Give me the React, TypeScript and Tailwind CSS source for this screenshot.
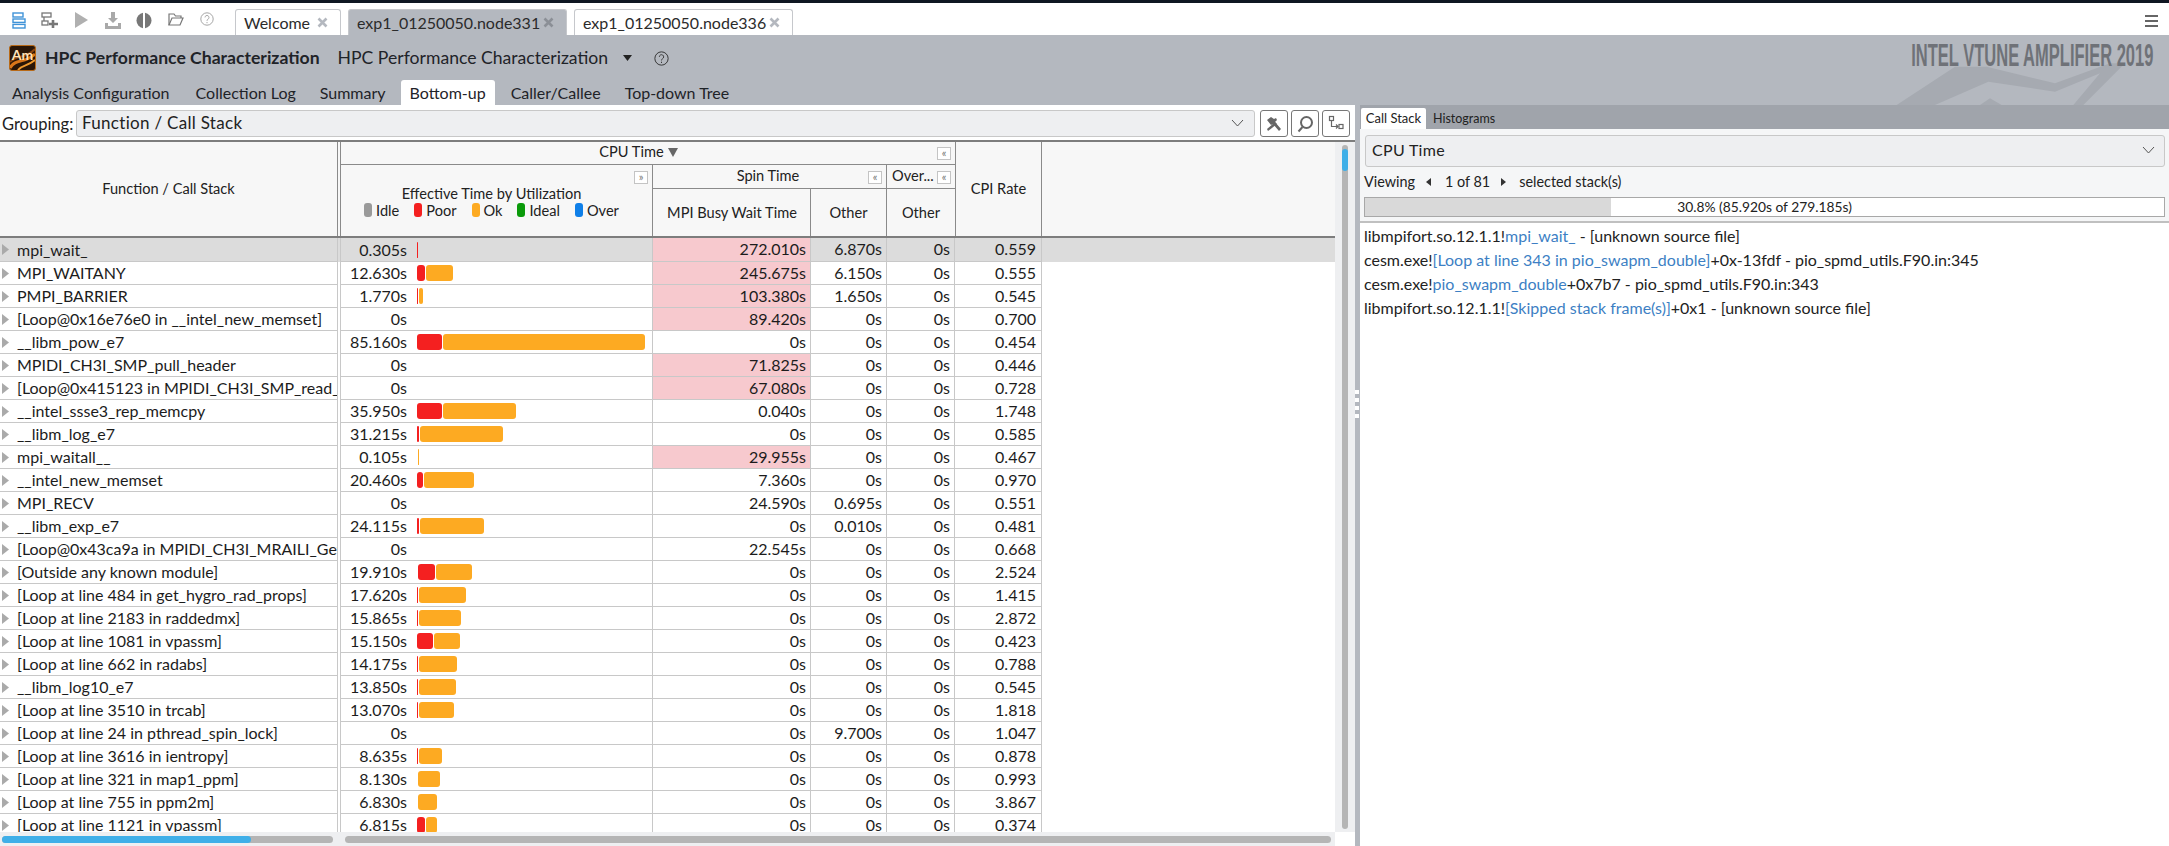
import React from 'react';

type Row = {
  name: string;
  eff: string;
  red?: number; // width of the red bar
  orange?: number;
  gap?: number; // left offset before the first bar
  busy: string;
  spin?: string;
  cpi: string;
  hot?: boolean;
};

const rows: Row[] = [
  { name: 'mpi_wait_', eff: '0.305s', red: 1, busy: '272.010s', spin: '6.870s', cpi: '0.559', hot: true },
  { name: 'MPI_WAITANY', eff: '12.630s', red: 8, orange: 27, busy: '245.675s', spin: '6.150s', cpi: '0.555', hot: true },
  { name: 'PMPI_BARRIER', eff: '1.770s', red: 1, orange: 4, busy: '103.380s', spin: '1.650s', cpi: '0.545', hot: true },
  { name: '[Loop@0x16e76e0 in __intel_new_memset]', eff: '0s', busy: '89.420s', cpi: '0.700', hot: true },
  { name: '__libm_pow_e7', eff: '85.160s', red: 25, orange: 202, busy: '0s', cpi: '0.454' },
  { name: 'MPIDI_CH3I_SMP_pull_header', eff: '0s', busy: '71.825s', cpi: '0.446', hot: true },
  { name: '[Loop@0x415123 in MPIDI_CH3I_SMP_read_', eff: '0s', busy: '67.080s', cpi: '0.728', hot: true },
  { name: '__intel_ssse3_rep_memcpy', eff: '35.950s', red: 25, orange: 73, busy: '0.040s', cpi: '1.748' },
  { name: '__libm_log_e7', eff: '31.215s', red: 2, orange: 83, busy: '0s', cpi: '0.585' },
  { name: 'mpi_waitall__', eff: '0.105s', orange: 1, gap: 1, busy: '29.955s', cpi: '0.467', hot: true },
  { name: '__intel_new_memset', eff: '20.460s', red: 6, orange: 50, busy: '7.360s', cpi: '0.970' },
  { name: 'MPI_RECV', eff: '0s', busy: '24.590s', spin: '0.695s', cpi: '0.551' },
  { name: '__libm_exp_e7', eff: '24.115s', red: 2, orange: 64, busy: '0s', spin: '0.010s', cpi: '0.481' },
  { name: '[Loop@0x43ca9a in MPIDI_CH3I_MRAILI_Get', eff: '0s', busy: '22.545s', cpi: '0.668' },
  { name: '[Outside any known module]', eff: '19.910s', red: 17, orange: 36, gap: 1, busy: '0s', cpi: '2.524' },
  { name: '[Loop at line 484 in get_hygro_rad_props]', eff: '17.620s', red: 1, orange: 47, busy: '0s', cpi: '1.415' },
  { name: '[Loop at line 2183 in raddedmx]', eff: '15.865s', red: 1, orange: 42, busy: '0s', cpi: '2.872' },
  { name: '[Loop at line 1081 in vpassm]', eff: '15.150s', red: 16, orange: 26, busy: '0s', cpi: '0.423' },
  { name: '[Loop at line 662 in radabs]', eff: '14.175s', red: 1, orange: 38, busy: '0s', cpi: '0.788' },
  { name: '__libm_log10_e7', eff: '13.850s', red: 1, orange: 37, busy: '0s', cpi: '0.545' },
  { name: '[Loop at line 3510 in trcab]', eff: '13.070s', red: 1, orange: 35, busy: '0s', cpi: '1.818' },
  { name: '[Loop at line 24 in pthread_spin_lock]', eff: '0s', busy: '0s', spin: '9.700s', cpi: '1.047' },
  { name: '[Loop at line 3616 in ientropy]', eff: '8.635s', red: 1, orange: 23, busy: '0s', cpi: '0.878' },
  { name: '[Loop at line 321 in map1_ppm]', eff: '8.130s', orange: 22, gap: 1, busy: '0s', cpi: '0.993' },
  { name: '[Loop at line 755 in ppm2m]', eff: '6.830s', orange: 19, gap: 1, busy: '0s', cpi: '3.867' },
  { name: '[Loop at line 1121 in vpassm]', eff: '6.815s', red: 8, orange: 11, busy: '0s', cpi: '0.374' },
];

const Collapse = ({ label, top }: { label: string; top: string }) => (
  <span className={`absolute right-[4px] flex h-[13px] w-[14px] items-center justify-center border border-[#c4c4c4] bg-white pb-[2px] text-[11px] leading-none text-[#777] ${top}`}>
    {label}
  </span>
);

const Pill = ({ color, label }: { color: string; label: string }) => (
  <span className="flex items-center gap-[4px]">
    <span className={`h-[14px] w-[8px] rounded-[3px] ${color}`} />
    {label}
  </span>
);

const Tab = ({ label, active, width }: { label: string; active?: boolean; width: string }) => (
  <div
    className={`flex h-[26px] items-center justify-between rounded-t-[3px] border border-b-0 border-[#c6c8cc] pl-[8px] pr-[12px] text-[16px] text-[#2b2b2b] ${width} ${
      active ? 'bg-[#b4b8bf]' : 'bg-white'
    }`}
  >
    <span>{label}</span>
    <svg width="11" height="11" viewBox="0 0 11 11">
      <path d="M1.5 1.5l8 8M9.5 1.5l-8 8" stroke={active ? '#8b8f96' : '#b4b8bf'} strokeWidth="2.6" />
    </svg>
  </div>
);

const Toolbar = () => (
  <div className="flex h-[32px] items-end bg-white">
    <div className="flex h-[32px] w-[235px] items-start pl-[12px] pt-[9px]">
      <svg width="14" height="17" viewBox="0 0 14 17" fill="none" stroke="#3f93d8" strokeWidth="1.4">
        <rect x="1" y="1" width="10" height="4" />
        <rect x="1" y="7" width="12" height="3.4" />
        <rect x="1" y="12.4" width="12" height="3.6" />
      </svg>
      <svg className="ml-[15px]" width="17" height="17" viewBox="0 0 17 17" fill="none" stroke="#777" strokeWidth="1.3">
        <rect x="1" y="1" width="9" height="4" />
        <rect x="1" y="9" width="6" height="4" />
        <path d="M3 5v4" />
        <path d="M12 8v8M8 12h9" strokeWidth="2.6" />
      </svg>
      <svg className="ml-[17px]" width="13" height="16" viewBox="0 0 13 16">
        <path d="M0 0l13 8-13 8z" fill="#b0b0b0" />
      </svg>
      <svg className="ml-[17px]" width="16" height="17" viewBox="0 0 16 17" fill="#a9a9a9">
        <path d="M6 0h4v6h3l-5 5-5-5h3z" />
        <path d="M0 11h3v3h10v-3h3v6H0z" />
      </svg>
      <svg className="ml-[15px]" width="16" height="17" viewBox="0 0 16 17" fill="#777">
        <path d="M7 .64A8 8 0 0 0 7 16.36z" />
        <path d="M9 .64A8 8 0 0 1 9 16.36z" />
      </svg>
      <svg className="ml-[16px]" width="16" height="15" viewBox="0 0 16 15" fill="none" stroke="#777" strokeWidth="1.2">
        <path d="M1 13V2h5l1.5 2H13v2" />
        <path d="M1 13l3-7h11l-3 7z" />
      </svg>
      <svg className="ml-[16px]" width="14" height="14" viewBox="0 0 14 14" fill="none" stroke="#a5a5a5" strokeWidth="1">
        <circle cx="7" cy="7" r="6.2" />
        <path d="M5 5.4a2 2 0 1 1 3 1.8c-.7.4-1 .8-1 1.6M7 10v1.2" />
      </svg>
    </div>
    <div className="flex items-end gap-[7px]">
      <Tab label="Welcome" width="w-[106px]" />
      <Tab label="exp1_01250050.node331" active width="w-[219px]" />
      <Tab label="exp1_01250050.node336" width="w-[219px]" />
    </div>
    <div className="mb-[8px] ml-auto mr-[11px] flex w-[13px] flex-col gap-[3px]">
      <span className="h-[2px] bg-[#666]" />
      <span className="h-[2px] bg-[#666]" />
      <span className="h-[2px] bg-[#666]" />
    </div>
  </div>
);

const Logo = () => (
  <div className="relative flex h-[26px] w-[27px] items-center justify-center overflow-hidden rounded-[3px] border border-[#b86a18] bg-[#2a1607]">
    <svg className="absolute inset-0" width="25" height="24" viewBox="0 0 25 24" fill="none">
      <path d="M0 22C6 12 14 18 25 8" stroke="#d9761a" strokeWidth="3" />
      <path d="M0 16C8 8 14 14 25 3" stroke="#8a4510" strokeWidth="2" />
      <path d="M8 24C12 19 18 20 25 14" stroke="#f09a2e" strokeWidth="2" />
    </svg>
    <span className="relative pb-[6px] text-[14px] font-bold leading-none text-[#ffe3b8]">Am</span>
  </div>
);

const Header = () => (
  <div className="relative h-[70px] overflow-hidden bg-[#b4b8bf] text-[#1f2328]">
    <svg className="absolute right-0 top-0" width="289" height="70" viewBox="0 15 867 210" fill="#a6aab1">
      <path d="M50 225L225 110h95l205 50 165-60h45L610 225h-30l80-95-135 55-200-30-160 70z" />
      <path d="M300 225l30-20 35 20z" />
    </svg>
    <div className="absolute right-[16px] top-[2px] origin-right scale-x-[0.516] whitespace-nowrap font-['Liberation_Sans'] text-[32px] font-bold leading-[36px] text-[#6f7278]">
      INTEL VTUNE AMPLIFIER 2019
    </div>
    <div className="flex h-[45px] items-center pl-[9px] pt-[1px]">
      <Logo />
      <span className="ml-[9px] text-[17.6px] font-bold">HPC Performance Characterization</span>
      <span className="ml-[18px] text-[17.6px]">HPC Performance Characterization</span>
      <svg className="ml-[15px]" width="9" height="6" viewBox="0 0 9 6">
        <path d="M0 0h9L4.5 6z" fill="#222" />
      </svg>
      <svg className="ml-[22px]" width="15" height="15" viewBox="0 0 14 14" fill="none" stroke="#333" strokeWidth="0.9">
        <circle cx="7" cy="7" r="6.2" />
        <path d="M5 5.4a2 2 0 1 1 3 1.8c-.7.4-1 .8-1 1.6M7 10v1.2" />
      </svg>
    </div>
    <div className="flex h-[25px] items-end text-[16px]">
      <span className="ml-[12px] flex h-[25px] items-center">Analysis Configuration</span>
      <span className="ml-[26px] flex h-[25px] items-center">Collection Log</span>
      <span className="ml-[24px] flex h-[25px] items-center">Summary</span>
      <span className="ml-[15px] flex h-[25px] items-center rounded-t-[3px] bg-white px-[9px]">Bottom-up</span>
      <span className="ml-[16px] flex h-[25px] items-center">Caller/Callee</span>
      <span className="ml-[24px] flex h-[25px] items-center">Top-down Tree</span>
    </div>
  </div>
);

const Chevron = () => (
  <svg width="13" height="8" viewBox="0 0 13 8" fill="none" stroke="#555" strokeWidth="1">
    <path d="M1 1l5.5 6L12 1" />
  </svg>
);

const ToolButton = ({ children }: { children: React.ReactNode }) => (
  <div className="flex h-[27px] w-[28px] items-center justify-center rounded-[3px] border border-[#777] bg-white">{children}</div>
);

const Grouping = () => (
  <div className="flex h-[37px] shrink-0 items-start border-b-2 border-[#7d7d7d] pt-[5px] text-[#222]">
    <span className="ml-[2px] w-[74px] pt-[2px] text-[16.5px]">Grouping:</span>
    <div className="flex h-[27px] w-[1179px] items-center justify-between rounded-[3px] border border-[#c8c8c8] bg-[#eeeff1] pb-[2px] pl-[5px] pr-[10px] text-[17px] tracking-[0.3px]">
      Function / Call Stack
      <Chevron />
    </div>
    <div className="ml-[5px] flex gap-[3px]">
      <ToolButton>
        <svg width="18" height="18" viewBox="0 0 18 18" fill="#666">
          <path d="M2 5l4-3 3 2 2-1 1 2-2 2 6 7-2 2-6-7-2 1z" />
          <path d="M12 9l-9 7-1-2 8-7z" />
        </svg>
      </ToolButton>
      <ToolButton>
        <svg width="18" height="18" viewBox="0 0 18 18" fill="none" stroke="#666" strokeWidth="2">
          <circle cx="10.5" cy="7.5" r="5.5" />
          <path d="M6.5 12l-4 4.5" />
        </svg>
      </ToolButton>
      <ToolButton>
        <svg width="18" height="18" viewBox="0 0 18 18" fill="none" stroke="#666" strokeWidth="1.2">
          <rect x="2.5" y="1.5" width="4" height="4" />
          <rect x="12" y="9.5" width="4" height="4" />
          <path d="M4.5 6v5.5H11M9 9.5l2 2-2 2" />
        </svg>
      </ToolButton>
    </div>
  </div>
);

const cellLine = 'border-r border-[#c8c8c8]';

const TableHeader = () => (
  <div className="flex h-[96px] shrink-0 border-b-2 border-[#7d7d7d] bg-[#f7f7f7] text-[14.6px] text-[#222]">
    <div className="flex w-[338px] shrink-0 items-center justify-center border-r border-[#8a8a8a]">Function / Call Stack</div>
    <div className="ml-[2px] grid w-[702px] shrink-0 grid-cols-[313px_158px_76px_68px_87px] grid-rows-[23px_24px_47px]">
      <div className="relative col-span-4 flex items-center justify-center border-b border-l border-[#8a8a8a] pb-[2px] pr-[19px]">
        CPU Time
        <svg className="ml-[4px]" width="10" height="9" viewBox="0 0 10 9">
          <path d="M0 0h10L5 9z" fill="#666" />
        </svg>
        <Collapse label="«" top="top-[5px]" />
      </div>
      <div className="row-span-3 flex items-center justify-center border-x border-[#8a8a8a]">CPI Rate</div>
      <div className="relative row-span-2 flex flex-col items-center justify-center border-x border-[#8a8a8a] pr-[10px] pt-[2px] leading-[17px]">
        <Collapse label="»" top="top-[6px]" />
        <span>Effective Time by Utilization</span>
        <div className="flex gap-[15px]">
          <Pill color="bg-[#9a9a9a]" label="Idle" />
          <Pill color="bg-[#f42020]" label="Poor" />
          <Pill color="bg-[#fdaa22]" label="Ok" />
          <Pill color="bg-[#0a9a0a]" label="Ideal" />
          <Pill color="bg-[#0f7fe8]" label="Over" />
        </div>
      </div>
      <div className="relative col-span-2 flex items-center justify-center border-b border-r border-[#8a8a8a] pb-[2px] pr-[3px]">
        Spin Time
        <Collapse label="«" top="top-[6px]" />
      </div>
      <div className="relative flex items-center border-b border-[#8a8a8a] pb-[2px] pl-[5px]">
        Over...
        <Collapse label="«" top="top-[6px]" />
      </div>
      <div className="flex items-center justify-center border-r border-[#8a8a8a] pl-[1px] pt-[1px]">MPI Busy Wait Time</div>
      <div className="flex items-center justify-center border-r border-[#8a8a8a] pt-[1px]">Other</div>
      <div className="flex items-center justify-center pt-[1px]">Other</div>
    </div>
  </div>
);

const Bars = ({ row }: { row: Row }) => (
  <div className="flex h-[16px] items-stretch gap-[1px]" style={{ marginLeft: row.gap ?? 0 }}>
    {row.red ? <div className="rounded-[3px] bg-[#f42020]" style={{ width: row.red }} /> : null}
    {row.orange ? <div className="rounded-[3px] bg-[#fdaa22]" style={{ width: row.orange }} /> : null}
  </div>
);

const TableRow = ({ row, selected }: { row: Row; selected: boolean }) => (
  <div className={`flex shrink-0 text-[16px] leading-[22px] text-[#1c1c1c] ${selected ? 'h-[24px] bg-[#dcdcdc]' : 'h-[23px]'}`}>
    <div className="flex w-[338px] shrink-0 items-center overflow-hidden whitespace-nowrap border-b border-r border-[#c8c8c8]">
      <svg className="ml-[2px] mr-[8px] shrink-0" width="7" height="11" viewBox="0 0 7 11">
        <path d="M0 0l7 5.5L0 11z" fill="#aaa" />
      </svg>
      {row.name}
    </div>
    <div className="ml-[2px] flex w-[702px] shrink-0 border-b border-[#c8c8c8]">
      <div className={`flex w-[313px] items-center border-l border-[#c8c8c8] ${cellLine}`}>
        <span className="w-[66px] text-right">{row.eff}</span>
        <div className="ml-[10px]">
          <Bars row={row} />
        </div>
      </div>
      <div className={`w-[158px] pr-[4px] text-right ${cellLine} ${row.hot ? 'bg-[#f7c9ce]' : ''}`}>{row.busy}</div>
      <div className={`w-[76px] pr-[4px] text-right ${cellLine}`}>{row.spin ?? '0s'}</div>
      <div className={`w-[68px] pr-[4px] text-right ${cellLine}`}>0s</div>
      <div className={`w-[87px] pr-[5px] text-right ${cellLine}`}>{row.cpi}</div>
    </div>
  </div>
);

const LeftPane = () => (
  <div className="flex w-[1355px] shrink-0 flex-col bg-white">
    <Grouping />
    <div className="flex min-h-0 flex-1">
      <div className="flex min-w-0 flex-1 flex-col">
        <TableHeader />
        <div className="flex min-h-0 flex-1 flex-col overflow-hidden">
          {rows.map((row, i) => (
            <TableRow key={row.name} row={row} selected={i === 0} />
          ))}
        </div>
        <div className="flex h-[14px] shrink-0 bg-[#eeeff1] pt-[4px]">
          <div className="ml-[2px] flex h-[7px] w-[331px] rounded-full bg-[#b5b5b5]">
            <div className="h-[7px] w-[249px] rounded-full bg-[#3fafe8]" />
          </div>
          <div className="ml-[12px] h-[7px] w-[986px] rounded-full bg-[#b5b5b5]" />
        </div>
      </div>
      {/* vertical scrollbar */}
      <div className="flex w-[20px] shrink-0 flex-col">
        <div className="flex-1 bg-[#eeeff1] px-[7px] py-[3px]">
          <div className="h-full rounded-full bg-[#b5b5b5] pt-[4px]">
            <div className="h-[22px] rounded-full bg-[#3fafe8]" />
          </div>
        </div>
        <div className="h-[14px] bg-white" />
      </div>
    </div>
  </div>
);

const Sash = () => (
  <div className="flex w-[5px] shrink-0 flex-col items-start justify-center gap-[4px] bg-[#b4b8bf] pb-[144px]">
    <span className="h-[4px] w-[4px] bg-white" />
    <span className="h-[4px] w-[4px] bg-white" />
    <span className="h-[4px] w-[4px] bg-white" />
    <span className="h-[4px] w-[4px] bg-white" />
  </div>
);

const link = 'text-[#3d7fc4]';

const RightPane = () => (
  <div className="flex min-w-0 flex-1 flex-col bg-white text-[#222]">
    <div className="flex h-[24px] shrink-0 items-end bg-[#a0a4ab] pl-[1px] text-[13px]">
      <span className="flex h-[21px] w-[65px] items-center justify-center rounded-t-[2px] bg-white pt-[1px]">Call Stack</span>
      <span className="ml-[7px] flex h-[21px] items-center pt-[1px] text-[12.5px]">Histograms</span>
    </div>
    <div className="flex h-[94px] shrink-0 flex-col border-b-2 border-[#c0c0c0] bg-[#f5f6f7] px-[4px] pt-[6px]">
      <div className="ml-[1px] flex h-[32px] items-center justify-between rounded-[3px] border border-[#c8c8c8] bg-[#eeeff1] pb-[2px] pl-[6px] pr-[9px] text-[16px] tracking-[0.3px]">
        CPU Time
        <Chevron />
      </div>
      <div className="flex h-[30px] items-center pb-[1px] text-[14.4px]">
        <span>Viewing</span>
        <svg className="ml-[11px]" width="5" height="8" viewBox="0 0 5 8">
          <path d="M5 0v8L0 4z" fill="#333" />
        </svg>
        <span className="ml-[14px]">1 of 81</span>
        <svg className="ml-[11px]" width="5" height="8" viewBox="0 0 5 8">
          <path d="M0 0v8l5-4z" fill="#333" />
        </svg>
        <span className="ml-[13px]">selected stack(s)</span>
      </div>
      <div className="relative h-[20px] border border-[#a8a8a8] bg-white">
        <div className="h-full w-[30.8%] bg-[#d9d9d9]" />
        <span className="absolute inset-0 flex items-center justify-center text-[13.8px] leading-none">30.8% (85.920s of 279.185s)</span>
      </div>
    </div>
    <div className="px-[4px] pt-[1px] text-[16px] leading-[24px]">
      <div>
        libmpifort.so.12.1.1!<span className={link}>mpi_wait_</span> - [unknown source file]
      </div>
      <div>
        cesm.exe!<span className={link}>[Loop at line 343 in pio_swapm_double]</span>+0x-13fdf - pio_spmd_utils.F90.in:345
      </div>
      <div>
        cesm.exe!<span className={link}>pio_swapm_double</span>+0x7b7 - pio_spmd_utils.F90.in:343
      </div>
      <div>
        libmpifort.so.12.1.1!<span className={link}>[Skipped stack frame(s)]</span>+0x1 - [unknown source file]
      </div>
    </div>
  </div>
);

const App: React.FC = () => (
  <div className="flex h-[846px] w-[2169px] flex-col overflow-hidden bg-white font-['Lato',sans-serif]">
    <div className="h-[3px] shrink-0 bg-[#0f1722]" />
    <Toolbar />
    <Header />
    <div className="flex min-h-0 flex-1">
      <LeftPane />
      <Sash />
      <RightPane />
    </div>
  </div>
);

export default App;
